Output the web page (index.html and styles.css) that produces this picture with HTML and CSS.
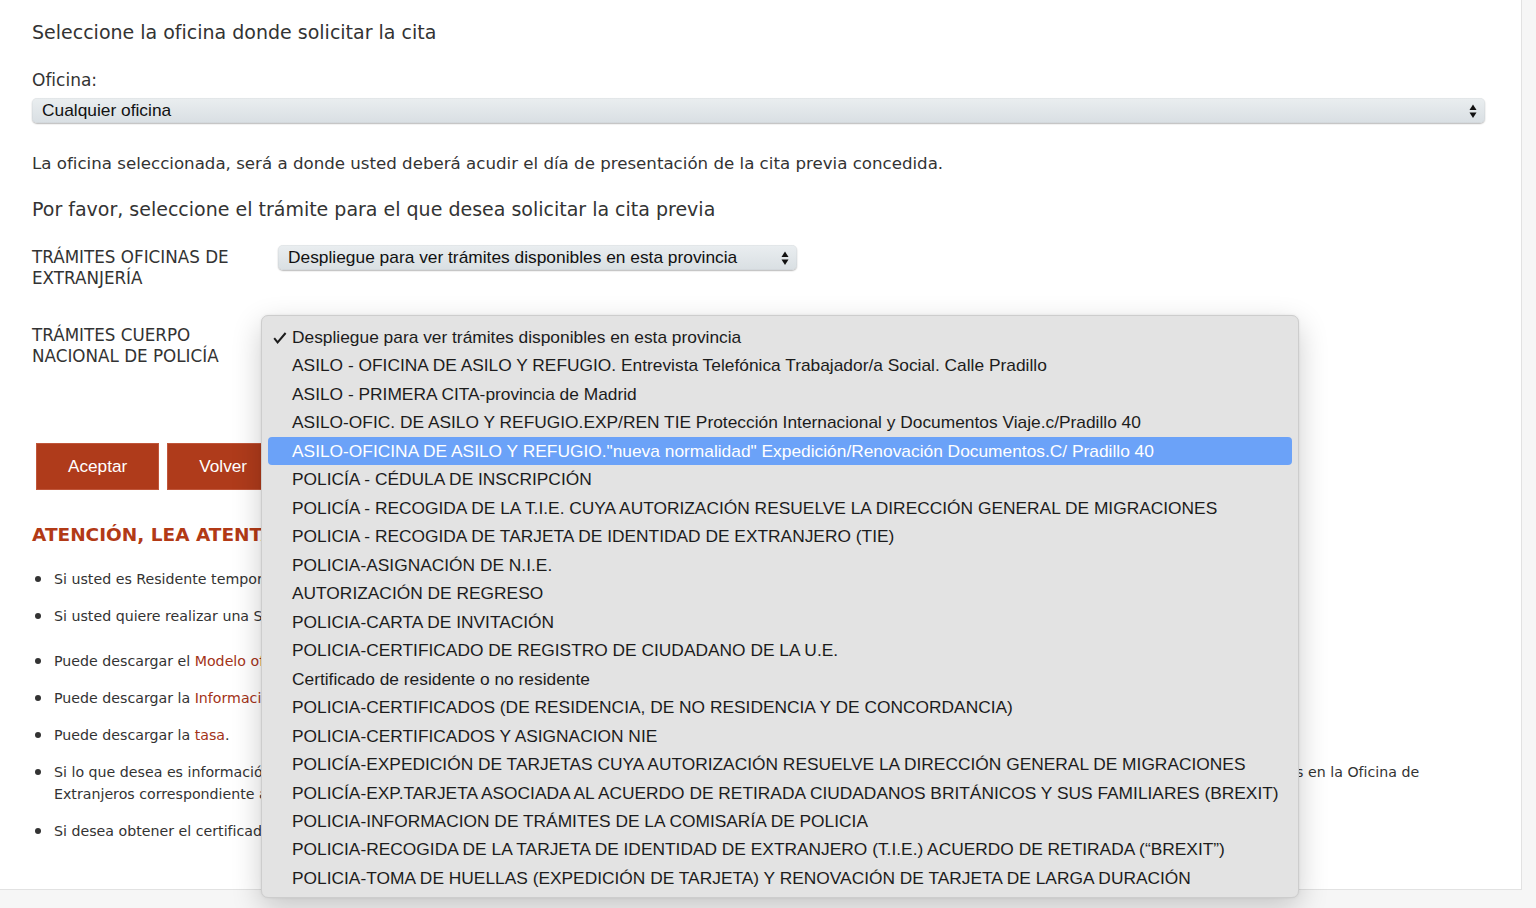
FILE: index.html
```html
<!DOCTYPE html>
<html lang="es">
<head>
<meta charset="utf-8">
<title>Cita previa</title>
<link rel="stylesheet" href="styles.css">
</head>
<body>
<div class="screen">
<div class="page">
  <h1 class="title">Seleccione la oficina donde solicitar la cita</h1>
  <div class="field-label">Oficina:</div>
  <div class="select select-wide">
    <span>Cualquier oficina</span>
    <svg class="arrows" width="8" height="16" viewBox="0 0 8 16"><polygon points="4,1.5 7.5,7 0.5,7"/><polygon points="0.5,9.5 7.5,9.5 4,15"/></svg>
  </div>
  <p class="note">La oficina seleccionada, será a donde usted deberá acudir el día de presentación de la cita previa concedida.</p>
  <h2 class="subtitle">Por favor, seleccione el trámite para el que desea solicitar la cita previa</h2>

  <div class="tramite-row">
    <div class="tramite-label">TRÁMITES OFICINAS DE EXTRANJERÍA</div>
    <div class="select select-mid">
      <span>Despliegue para ver trámites disponibles en esta provincia</span>
      <svg class="arrows" width="8" height="16" viewBox="0 0 8 16"><polygon points="4,1.5 7.5,7 0.5,7"/><polygon points="0.5,9.5 7.5,9.5 4,15"/></svg>
    </div>
  </div>
  <div class="tramite-row row-2">
    <div class="tramite-label">TRÁMITES CUERPO NACIONAL DE POLICÍA</div>
    <div class="select select-mid">
      <span>Despliegue para ver trámites disponibles en esta provincia</span>
      <svg class="arrows" width="8" height="16" viewBox="0 0 8 16"><polygon points="4,1.5 7.5,7 0.5,7"/><polygon points="0.5,9.5 7.5,9.5 4,15"/></svg>
    </div>
  </div>

  <div class="buttons">
    <button class="btn">Aceptar</button>
    <button class="btn">Volver</button>
  </div>

  <h3 class="attention">ATENCIÓN, LEA ATENTAMENTE:</h3>
  <ul class="notes">
    <li>Si usted es Residente temporal o de larga duración y desea renovar su autorización, debe solicitarlo a través de la sede electrónica.</li>
    <li class="extra">Si usted quiere realizar una Solicitud de Autorización Inicial, puede presentarla también de forma telemática.</li>
    <li>Puede descargar el <a href="#">Modelo oficial de solicitud</a> correspondiente a su trámite.</li>
    <li>Puede descargar la <a href="#">Información sobre los trámites</a>.</li>
    <li>Puede descargar la <a href="#">tasa</a>.</li>
    <li>Si lo que desea es información sobre el estado de tramitación de su expediente, puede consultarlo en la sede electrónica o bien solicitar citas para información de expedientes en la Oficina de Extranjeros correspondiente a su domicilio.</li>
    <li>Si desea obtener el certificado de registro de ciudadano de la Unión, consulte los requisitos.</li>
  </ul>

  <div class="popup">
    <div class="item checked"><svg class="check" width="14" height="12" viewBox="0 0 14 12"><path d="M1.2 6.2 L4.6 10.4 L12.6 1"/></svg>Despliegue para ver trámites disponibles en esta provincia</div>
    <div class="item">ASILO - OFICINA DE ASILO Y REFUGIO. Entrevista Telefónica Trabajador/a Social. Calle Pradillo</div>
    <div class="item">ASILO - PRIMERA CITA-provincia de Madrid</div>
    <div class="item">ASILO-OFIC. DE ASILO Y REFUGIO.EXP/REN TIE Protección Internacional y Documentos Viaje.c/Pradillo 40</div>
    <div class="item active">ASILO-OFICINA DE ASILO Y REFUGIO."nueva normalidad" Expedición/Renovación Documentos.C/ Pradillo 40</div>
    <div class="item">POLICÍA - CÉDULA DE INSCRIPCIÓN</div>
    <div class="item">POLICÍA - RECOGIDA DE LA T.I.E. CUYA AUTORIZACIÓN RESUELVE LA DIRECCIÓN GENERAL DE MIGRACIONES</div>
    <div class="item">POLICIA - RECOGIDA DE TARJETA DE IDENTIDAD DE EXTRANJERO (TIE)</div>
    <div class="item">POLICIA-ASIGNACIÓN DE N.I.E.</div>
    <div class="item">AUTORIZACIÓN DE REGRESO</div>
    <div class="item">POLICIA-CARTA DE INVITACIÓN</div>
    <div class="item">POLICIA-CERTIFICADO DE REGISTRO DE CIUDADANO DE LA U.E.</div>
    <div class="item">Certificado de residente o no residente</div>
    <div class="item">POLICIA-CERTIFICADOS (DE RESIDENCIA, DE NO RESIDENCIA Y DE CONCORDANCIA)</div>
    <div class="item">POLICIA-CERTIFICADOS Y ASIGNACION NIE</div>
    <div class="item">POLICÍA-EXPEDICIÓN DE TARJETAS CUYA AUTORIZACIÓN RESUELVE LA DIRECCIÓN GENERAL DE MIGRACIONES</div>
    <div class="item">POLICÍA-EXP.TARJETA ASOCIADA AL ACUERDO DE RETIRADA CIUDADANOS BRITÁNICOS Y SUS FAMILIARES (BREXIT)</div>
    <div class="item">POLICIA-INFORMACION DE TRÁMITES DE LA COMISARÍA DE POLICIA</div>
    <div class="item">POLICIA-RECOGIDA DE LA TARJETA DE IDENTIDAD DE EXTRANJERO (T.I.E.) ACUERDO DE RETIRADA (“BREXIT”)</div>
    <div class="item">POLICIA-TOMA DE HUELLAS (EXPEDICIÓN DE TARJETA) Y RENOVACIÓN DE TARJETA DE LARGA DURACIÓN</div>
  </div>
</div>
</div>
</body>
</html>
```
FILE: styles.css
```css
html,
body {
  margin: 0;
  background: #f6f6f6;
}

body {
  font-family: "DejaVu Sans", "Noto Sans", sans-serif;
  color: #333;
}

.screen {
  height: 908px;
}

.page {
  position: relative;
  box-sizing: border-box;
  width: 1522px;
  height: 890px;
  padding: 20px 36px 0 32px;
  background: #fff;
  border-right: 1px solid #e2e2e2;
  border-bottom: 1px solid #e2e2e2;
}

.title {
  margin: 0;
  font-size: 19px;
  font-weight: normal;
  line-height: 24px;
}

.field-label {
  margin-top: 26px;
  font-size: 17px;
  line-height: 20px;
}

.select {
  box-sizing: border-box;
  height: 25px;
  display: flex;
  align-items: center;
  justify-content: space-between;
  padding: 0 8px 0 10px;
  border-radius: 5px;
  background: linear-gradient(#eaeef0, #d9dfe3);
  box-shadow: 0 1px 1.5px rgba(0, 0, 0, 0.28), inset 0 0 0 0.5px rgba(0, 0, 0, 0.06);
  font-family: "Liberation Sans", Arial, sans-serif;
  font-size: 17.35px;
  color: #111;
  white-space: nowrap;
}

.arrows {
  flex: none;
  fill: #111;
}

.select-wide {
  margin-top: 8px;
}

.note {
  margin: 31px 0 0;
  font-size: 16.65px;
  line-height: 20px;
}

.subtitle {
  margin: 23px 0 0;
  font-size: 19px;
  font-weight: normal;
  line-height: 24px;
}

.tramite-row {
  display: flex;
  align-items: flex-start;
  margin-top: 24px;
}

.row-2 {
  margin-top: 34px;
}

.tramite-label {
  flex: none;
  box-sizing: border-box;
  width: 246px;
  padding: 2px 16px 0 0;
  font-size: 16.75px;
  line-height: 21px;
}

.select-mid {
  width: 519px;
}

.buttons {
  display: flex;
  gap: 8px;
  margin: 76px 0 0 4px;
}

.btn {
  box-sizing: border-box;
  height: 47px;
  padding: 0 31px;
  background: #af3b1b;
  border: 1px solid #c0563a;
  color: #fff;
  font-family: "Liberation Sans", Arial, sans-serif;
  font-size: 17.2px;
}

.attention {
  margin: 34px 0 0;
  font-size: 18.5px;
  font-weight: bold;
  line-height: 22px;
  color: #b23a16;
}

.notes {
  list-style: none;
  margin: 22px 0 0;
  padding: 0;
}

.notes li {
  position: relative;
  padding-left: 22px;
  font-size: 14.2px;
  line-height: 22px;
  margin-bottom: 15px;
}

.notes li::before {
  content: "";
  position: absolute;
  left: 3px;
  top: 8px;
  width: 6px;
  height: 6px;
  border-radius: 50%;
  background: #333;
}

.notes li.extra {
  margin-bottom: 23px;
}

.notes a {
  color: #a33318;
  text-decoration: none;
}

.popup {
  position: absolute;
  left: 261px;
  top: 315px;
  z-index: 2;
  box-sizing: border-box;
  width: 1038px;
  height: 583px;
  padding: 7px 6px 0;
  background: #e3e3e3;
  border: 1px solid #cdcdcd;
  border-radius: 7px;
  box-shadow: 0 10px 30px rgba(0, 0, 0, 0.2), 0 0 3px rgba(0, 0, 0, 0.08);
  font-family: "Liberation Sans", Arial, sans-serif;
  font-size: 17.35px;
  color: #1c1c1c;
}

.item {
  position: relative;
  height: 28.47px;
  line-height: 28.47px;
  padding-left: 24px;
  border-radius: 4px;
  white-space: nowrap;
}

.item.active {
  background: #6ba2f8;
  color: #fff;
}

.check {
  position: absolute;
  left: 5px;
  top: 9px;
  fill: none;
  stroke: #1c1c1c;
  stroke-width: 2;
}
```
